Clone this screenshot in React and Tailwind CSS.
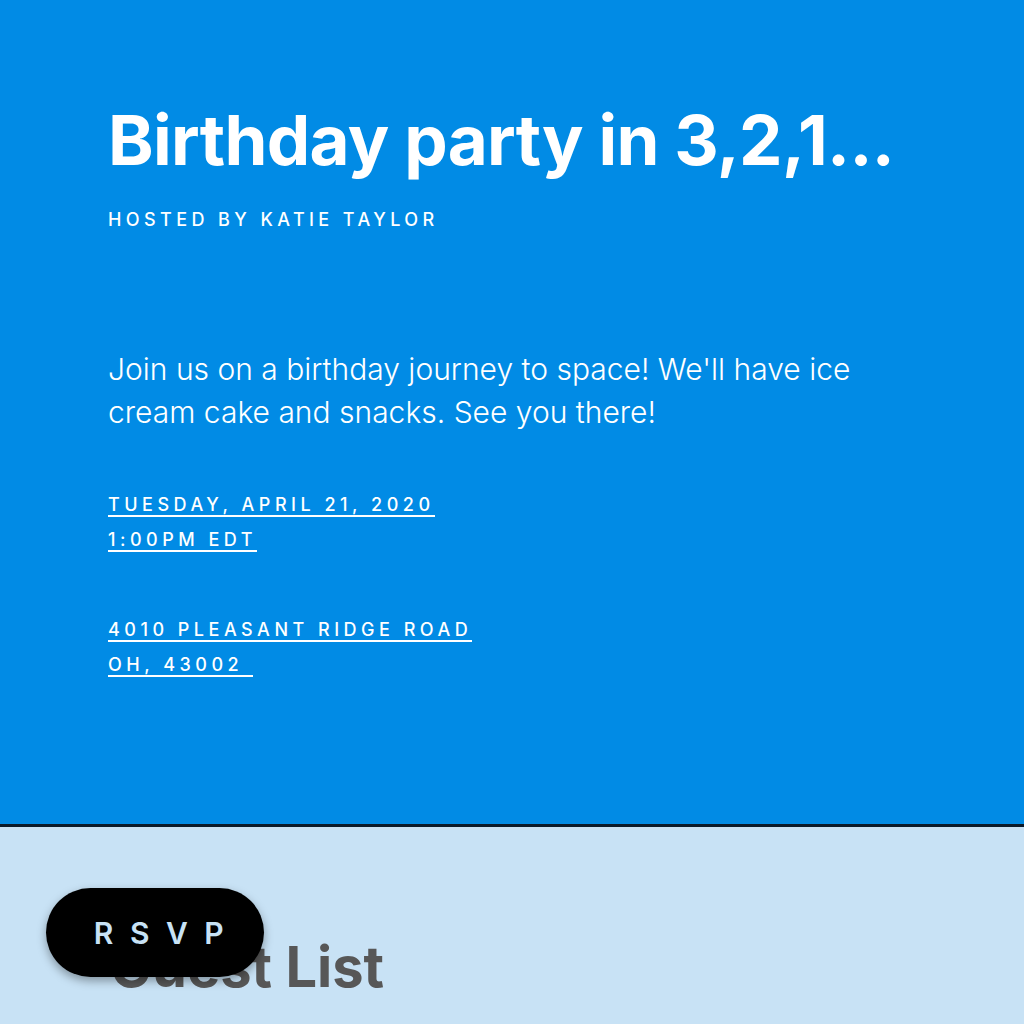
import React from 'react';

const detailLink = "self-start text-[18px] font-medium uppercase tracking-[0.25em] border-b-2 border-white leading-[20px]";

const App = () => {
  return (
    <div className="relative h-[1024px] overflow-hidden bg-[#c8e2f5] font-['Inter','Noto_Sans',sans-serif]">
      {/* HERO */}
      <div className="bg-[#018be5] text-white px-[108px] pt-[98px] h-[827px] border-b-[3px] border-[#0a1a2a]">
        <h1 className="text-[69px] font-bold leading-[84px] tracking-[-0.01em]">Birthday party in 3,2,1...</h1>
        <p className="mt-[26px] text-[18px] font-medium uppercase tracking-[0.245em] leading-[24px]">Hosted by Katie Taylor</p>

        <p className="mt-[116px] text-[30px] font-light leading-[43px] max-w-[790px]">
          Join us on a birthday journey to space! We'll have ice cream cake and snacks. See you there!
        </p>

        <div className="mt-[61px] flex flex-col gap-[13px]">
          <span className={detailLink}>Tuesday, April 21, 2020</span>
          <span className={detailLink}>1:00pm EDT</span>
        </div>

        <div className="mt-[68px] flex flex-col gap-[13px]">
          <span className={detailLink}>4010 Pleasant Ridge Road</span>
          <span className={detailLink}>OH, 43002&nbsp;</span>
        </div>
      </div>

      {/* GUEST LIST */}
      <div className="px-[110px] pt-[112px]">
        <h2 className="text-[56px] font-bold text-[#575757] leading-none">Guest List</h2>
      </div>

      {/* RSVP floating button */}
      <button className="absolute left-[46px] top-[888px] w-[218px] h-[89px] rounded-full bg-black text-[#c8e2f5] text-[30px] font-semibold tracking-[0.55em] pl-[24px] leading-none shadow-[0_4px_10px_rgba(0,0,0,0.35)]">
        RSVP
      </button>
    </div>
  );
};

export default App;
